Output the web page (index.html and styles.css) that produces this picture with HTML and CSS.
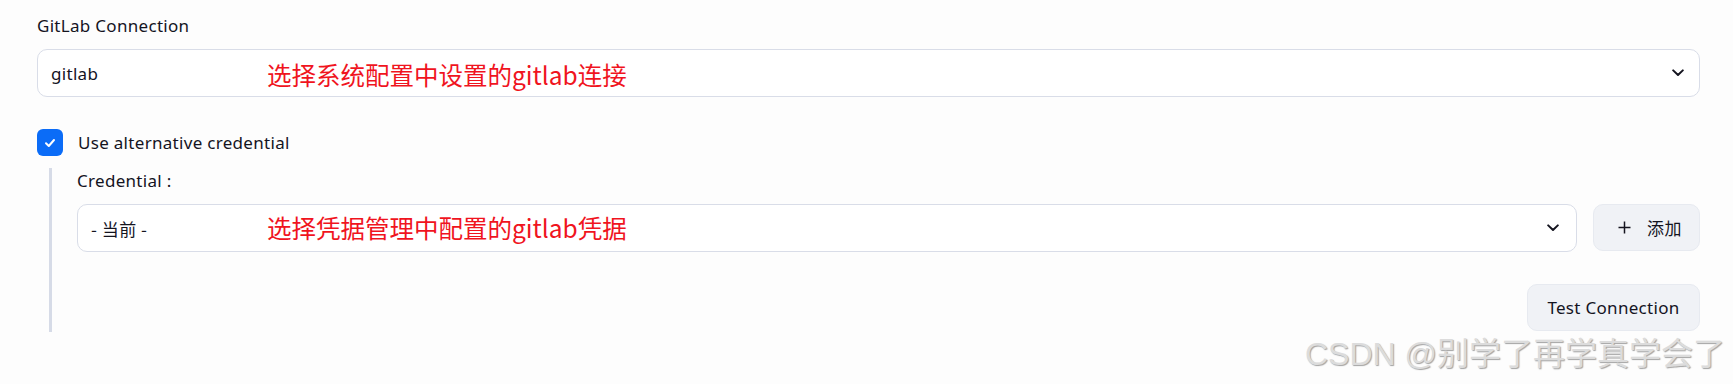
FILE: index.html
```html
<!DOCTYPE html>
<html lang="zh">
<head>
<meta charset="utf-8">
<title>GitLab Connection</title>
<link rel="stylesheet" href="styles.css">
</head>
<body>
<div class="page">
  <div class="field-label">GitLab Connection</div>
  <div class="select">
    <span class="select-value">gitlab</span>
    <span class="note note-first">选择系统配置中设置的gitlab连接</span>
    <svg class="chevron" width="12" height="8" viewBox="0 0 12 8"><path d="M1.2 1.4 L6 6 L10.8 1.4" fill="none" stroke="#14141f" stroke-width="2" stroke-linecap="round" stroke-linejoin="round"/></svg>
  </div>

  <div class="check-row">
    <span class="checkbox">
      <svg width="14" height="14" viewBox="0 0 14 14"><path d="M3 7.3 L5.8 10 L11 4" fill="none" stroke="#fff" stroke-width="2" stroke-linecap="round" stroke-linejoin="round"/></svg>
    </span>
    <span class="check-label">Use alternative credential</span>
  </div>

  <div class="nested">
    <div class="field-label sub">Credential :</div>
    <div class="cred-row">
      <div class="select cred-select">
        <span class="select-value cjk">- 当前 -</span>
        <span class="note note-second">选择凭据管理中配置的gitlab凭据</span>
        <svg class="chevron" width="12" height="8" viewBox="0 0 12 8"><path d="M1.2 1.4 L6 6 L10.8 1.4" fill="none" stroke="#14141f" stroke-width="2" stroke-linecap="round" stroke-linejoin="round"/></svg>
      </div>
      <button class="btn add-btn">
        <svg width="13" height="13" viewBox="0 0 13 13"><path d="M6.5 0.5 V12.5 M0.5 6.5 H12.5" stroke="#14141f" stroke-width="1.5"/></svg>
        <span class="cjk">添加</span>
      </button>
    </div>
    <div class="test-row">
      <button class="btn test-btn">Test Connection</button>
    </div>
  </div>
</div>
<div class="watermark">CSDN @别学了再学真学会了</div>
</body>
</html>
```

FILE: styles.css
```css
html, body {
  margin: 0;
  padding: 0;
  background: #fdfdfd;
}
body {
  font-family: "Noto Sans", "Noto Sans CJK SC", sans-serif;
  color: #14141f;
  font-size: 17px;
  letter-spacing: 0.3px;
  position: relative;
  width: 1733px;
  height: 384px;
  overflow: hidden;
}
.page {
  padding: 14px 33px 0 37px;
}
.field-label {
  font-size: 17px;
  line-height: 24px;
  margin-bottom: 11px;
}
.select {
  position: relative;
  height: 48px;
  box-sizing: border-box;
  border: 1px solid #d9dde8;
  border-radius: 10px;
  background: #ffffff;
  display: flex;
  align-items: center;
  padding: 0 15px 0 13px;
}
.select-value {
  flex: 1;
  font-size: 17px;
}
.cjk {
  font-family: "Noto Sans CJK SC", sans-serif;
  letter-spacing: 0.5px;
}
.chevron {
  display: block;
}
.note {
  position: absolute;
  top: 50%;
  transform: translateY(-50%);
  font-family: "Noto Sans CJK SC", sans-serif;
  font-size: 24.5px;
  line-height: 30px;
  letter-spacing: 0;
  color: #f0141e;
  white-space: nowrap;
}
.note-first { left: 229px; margin-top: 2px; }
.note-second { left: 189px; }

.check-row {
  margin-top: 32px;
  display: flex;
  align-items: center;
  gap: 15px;
  height: 27px;
}
.checkbox {
  width: 26px;
  height: 27px;
  border-radius: 6px;
  background: #0b6cf7;
  display: flex;
  align-items: center;
  justify-content: center;
}
.checkbox svg { display: block; }
.check-label {
  font-size: 17px;
  line-height: 24px;
}

.nested {
  margin-top: 12px;
  margin-left: 12px;
  border-left: 3px solid #d6dbe7;
  padding-left: 25px;
  padding-bottom: 1px;
}
.field-label.sub {
  padding-top: 1px;
  margin-bottom: 11px;
}
.cred-row {
  display: flex;
  gap: 16px;
}
.cred-select {
  flex: 1;
  padding-right: 17px;
}
.btn {
  font-family: "Noto Sans", "Noto Sans CJK SC", sans-serif;
  font-size: 17px;
  letter-spacing: 0.3px;
  color: #14141f;
  background: #f0f2f6;
  border: 1px solid #e7eaf0;
  border-radius: 10px;
  height: 47px;
  box-sizing: border-box;
  display: flex;
  align-items: center;
  cursor: pointer;
}
.add-btn {
  width: 107px;
  padding: 0 0 0 24px;
  gap: 16px;
}
.add-btn svg { display: block; }
.test-row {
  margin-top: 32px;
  display: flex;
  justify-content: flex-end;
}
.test-btn {
  padding: 0 18px;
  width: 173px;
  justify-content: center;
}

.watermark {
  position: absolute;
  right: 8px;
  top: 334px;
  font-family: "Liberation Sans", "Noto Sans CJK SC", sans-serif;
  font-size: 32px;
  line-height: 40px;
  letter-spacing: 0;
  color: #dcdcdc;
  text-shadow: 1px 1px 1px rgba(90, 90, 90, 0.55);
  white-space: nowrap;
}
```
